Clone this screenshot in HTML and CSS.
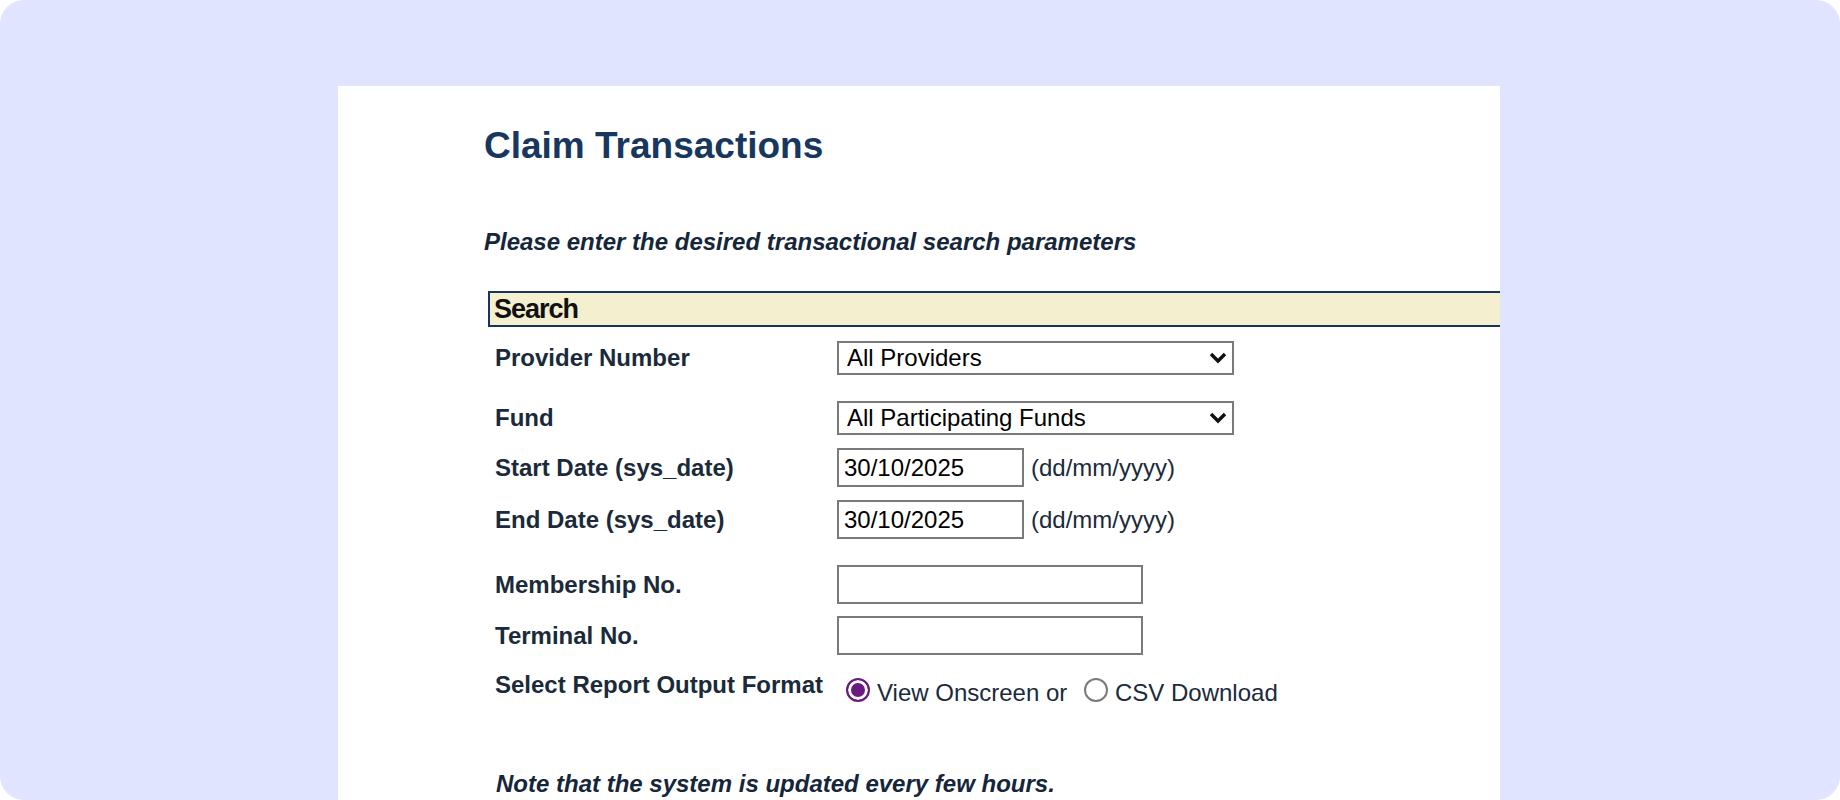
FILE: index.html
```html
<!DOCTYPE html>
<html lang="en">
<head>
<meta charset="utf-8">
<title>Claim Transactions</title>
<link rel="stylesheet" href="styles.css">
</head>
<body>
<div class="frame">
  <main class="panel">
    <h1 class="title">Claim Transactions</h1>
    <p class="intro">Please enter the desired transactional search parameters</p>
    <section class="search">
      <div class="search-head">Search</div>
      <div class="form">
        <div class="row row-provider">
          <span class="label">Provider Number</span>
          <div class="field">
            <span class="select-wrap">
              <select class="select"><option>All Providers</option></select>
              <svg class="chev" width="18" height="12" viewBox="0 0 18 12"><path d="M2 2 L9 9 L16 2" fill="none" stroke="#111" stroke-width="3.4"/></svg>
            </span>
          </div>
        </div>
        <div class="row row-fund">
          <span class="label">Fund</span>
          <div class="field">
            <span class="select-wrap">
              <select class="select"><option>All Participating Funds</option></select>
              <svg class="chev" width="18" height="12" viewBox="0 0 18 12"><path d="M2 2 L9 9 L16 2" fill="none" stroke="#111" stroke-width="3.4"/></svg>
            </span>
          </div>
        </div>
        <div class="row row-start">
          <span class="label">Start Date (sys_date)</span>
          <div class="field">
            <input class="text date" type="text" value="30/10/2025"><span class="hint">(dd/mm/yyyy)</span>
          </div>
        </div>
        <div class="row row-end">
          <span class="label">End Date (sys_date)</span>
          <div class="field">
            <input class="text date" type="text" value="30/10/2025"><span class="hint">(dd/mm/yyyy)</span>
          </div>
        </div>
        <div class="row row-member">
          <span class="label">Membership No.</span>
          <div class="field">
            <input class="text wide" type="text">
          </div>
        </div>
        <div class="row row-terminal">
          <span class="label">Terminal No.</span>
          <div class="field">
            <input class="text wide" type="text">
          </div>
        </div>
        <div class="row row-format">
          <span class="label">Select Report Output Format</span>
          <div class="field radios">
            <label class="opt"><input class="radio" type="radio" name="fmt" checked>View Onscreen or</label>
            <label class="opt opt-second"><input class="radio" type="radio" name="fmt">CSV Download</label>
          </div>
        </div>
      </div>
      <p class="note">Note that the system is updated every few hours.</p>
    </section>
  </main>
</div>
</body>
</html>
```

FILE: styles.css
```css
* { box-sizing: border-box; }

html, body {
  margin: 0;
  padding: 0;
  background: #ffffff;
}

body {
  font-family: "Liberation Sans", Arial, sans-serif;
  color: #1b2a3a;
}

.frame {
  width: 1840px;
  height: 800px;
  background: #e0e4fe;
  border-radius: 24px;
  overflow: hidden;
  padding: 86px 0 0 338px;
}

.panel {
  width: 1162px;
  height: 714px;
  background: #ffffff;
  overflow: hidden;
  padding: 38px 0 0 146px;
}

.title {
  margin: 0;
  font-size: 37px;
  line-height: 44px;
  font-weight: bold;
  color: #17375e;
}

.intro {
  margin: 60px 0 0 0;
  font-size: 24px;
  line-height: 28px;
  font-weight: bold;
  font-style: italic;
  color: #15263a;
}

.search {
  margin: 35px 0 0 4px;
}

.search-head {
  width: 1100px;
  height: 36px;
  border: 2px solid #18345e;
  background: #f3efcf;
  padding-left: 4px;
  font-size: 27px;
  letter-spacing: -1px;
  line-height: 32px;
  font-weight: bold;
  color: #111111;
}

.form {
  display: flex;
  flex-direction: column;
}

.row {
  display: flex;
  align-items: center;
}

.label {
  width: 349px;
  padding-left: 7px;
  font-size: 24px;
  line-height: 28px;
  font-weight: bold;
  color: #1b2a3a;
  flex: none;
}

.field {
  display: flex;
  align-items: center;
}

.row-provider { margin-top: 14px; height: 34px; }
.row-fund { margin-top: 26px; height: 34px; }
.row-start { margin-top: 13px; height: 39px; }
.row-end { margin-top: 13px; height: 39px; }
.row-member { margin-top: 26px; height: 39px; }
.row-terminal { margin-top: 12px; height: 39px; }

.select-wrap {
  position: relative;
  display: inline-block;
  width: 397px;
  height: 34px;
}

.select {
  -webkit-appearance: none;
  appearance: none;
  width: 397px;
  height: 34px;
  border: 2px solid #7a7a7a;
  border-radius: 0;
  background: #ffffff;
  padding: 0 30px 0 8px;
  margin: 0;
  font-family: "Liberation Sans", Arial, sans-serif;
  font-size: 24px;
  line-height: 30px;
  color: #000000;
}

.chev {
  position: absolute;
  right: 7px;
  top: 11px;
  pointer-events: none;
}

.text {
  height: 39px;
  border: 2px solid #7a7a7a;
  border-radius: 0;
  background: #ffffff;
  padding: 0 5px;
  margin: 0;
  font-family: "Liberation Sans", Arial, sans-serif;
  font-size: 24px;
  color: #000000;
  outline: none;
}

.date { width: 187px; }
.wide { width: 306px; }

.hint {
  margin-left: 7px;
  font-size: 24px;
  color: #1b2a3a;
}

.row-format {
  margin-top: 16px;
  align-items: flex-start;
}

.radios {
  display: block;
  padding-top: 7px;
  font-size: 24px;
  line-height: 28px;
  color: #1b2a3a;
}

.opt {
  white-space: nowrap;
}

.radio {
  -webkit-appearance: none;
  appearance: none;
  width: 24px;
  height: 24px;
  margin: 0 7px 0 9px;
  border: 2px solid #7a7a7a;
  border-radius: 50%;
  background: #ffffff;
  vertical-align: -1px;
}

.opt-second .radio {
  margin-left: 10px;
}

.radio:checked {
  border-color: #6a1b7e;
  background: #6a1b7e;
  box-shadow: inset 0 0 0 3px #ffffff;
}

.note {
  margin: 63px 0 0 8px;
  font-size: 24px;
  line-height: 28px;
  font-weight: bold;
  font-style: italic;
  color: #15263a;
}
```
